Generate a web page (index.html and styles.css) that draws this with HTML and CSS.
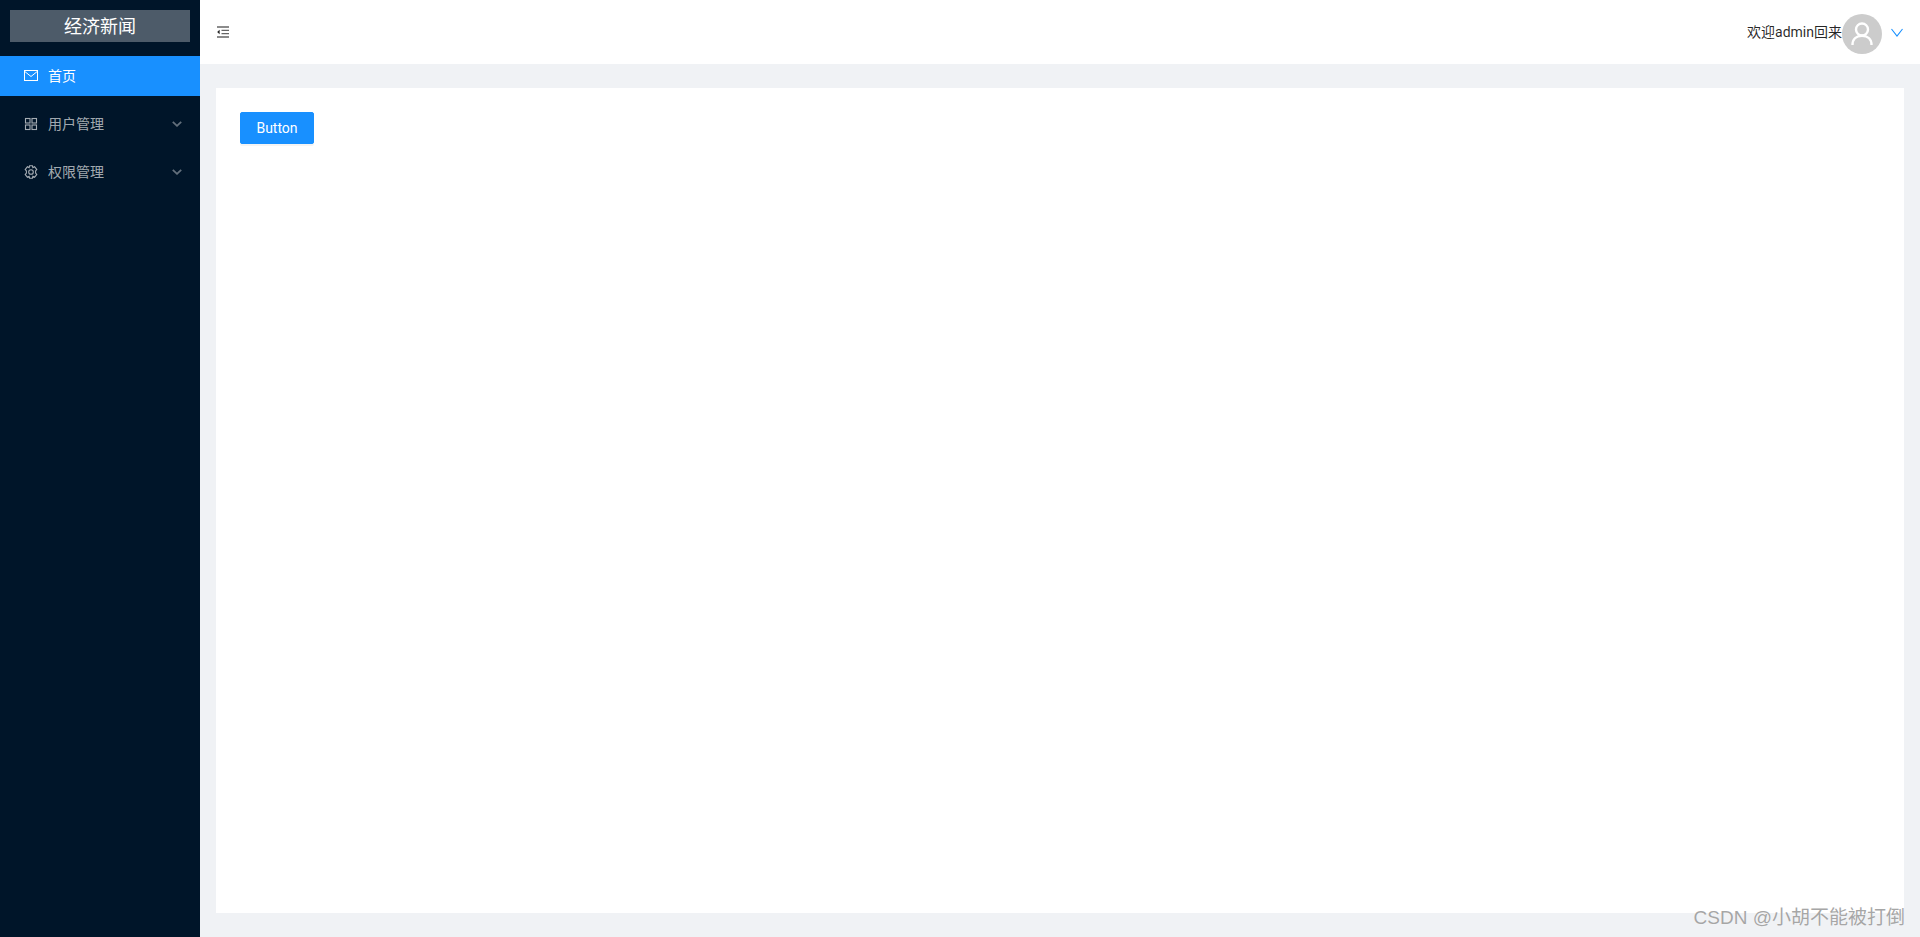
FILE: index.html
```html
<!DOCTYPE html>
<html lang="zh-CN">
<head>
  <meta charset="UTF-8" />
  <title>经济新闻</title>
  <link rel="stylesheet" href="styles.css">
</head>
<body>
  <div class="layout">
    <aside class="sider">
      <div class="logo">经济新闻</div>
      <ul class="menu">
        <li class="menu-item selected">
          <svg class="menu-icon" viewBox="0 0 14 14" fill="none" stroke="currentColor" stroke-width="1">
            <rect x="0.5" y="1.5" width="13" height="10"/>
            <path d="M0.8 2.5 L7 7.5 L13.2 2.5"/>
          </svg>
          <span class="label">首页</span>
        </li>
        <li class="menu-item">
          <svg class="menu-icon" viewBox="0 0 14 14" fill="none" stroke="currentColor" stroke-width="1.1">
            <rect x="1.5" y="1.5" width="4.5" height="4.5"/>
            <rect x="8" y="1.5" width="4.5" height="4.5"/>
            <rect x="1.5" y="8" width="4.5" height="4.5"/>
            <rect x="8" y="8" width="4.5" height="4.5"/>
          </svg>
          <span class="label">用户管理</span>
          <svg class="arrow" viewBox="0 0 10 6" fill="none" stroke="currentColor" stroke-width="1.8">
            <path d="M0.8 0.8 L5 4.8 L9.2 0.8"/>
          </svg>
        </li>
        <li class="menu-item">
          <svg class="menu-icon" viewBox="0 0 14 14" fill="none" stroke="currentColor" stroke-width="1.1">
            <path d="M5.6 0.8 H8.4 L8.9 2.6 L10.6 1.8 L12.8 4.4 L11.6 6 V8 L12.8 9.6 L10.6 12.2 L8.9 11.4 L8.4 13.2 H5.6 L5.1 11.4 L3.4 12.2 L1.2 9.6 L2.4 8 V6 L1.2 4.4 L3.4 1.8 L5.1 2.6 Z"/>
            <circle cx="7" cy="7" r="2.3"/>
          </svg>
          <span class="label">权限管理</span>
          <svg class="arrow" viewBox="0 0 10 6" fill="none" stroke="currentColor" stroke-width="1.8">
            <path d="M0.8 0.8 L5 4.8 L9.2 0.8"/>
          </svg>
        </li>
      </ul>
    </aside>

    <div class="main">
      <header class="header">
        <svg class="fold" viewBox="0 0 12 12" fill="none" stroke="#666" stroke-width="1.3">
          <path d="M0 1 H12 M4.5 4.4 H12 M4.5 7.6 H12 M0 11 H12"/>
          <path d="M2.6 3.8 L0.2 6 L2.6 8.2 Z" fill="#222" stroke="none"/>
        </svg>
        <div class="user">
          <span class="welcome">欢迎admin回来</span>
          <div class="avatar">
            <svg viewBox="0 0 40 40" fill="none" stroke="#fff" stroke-width="2.4">
              <circle cx="20" cy="15.5" r="6"/>
              <path d="M10.5 31 C10.5 25 14.5 21.8 20 21.8 C25.5 21.8 29.5 25 29.5 31"/>
            </svg>
          </div>
          <svg class="down" viewBox="0 0 12 9" fill="none" stroke="#1890ff" stroke-width="1.1">
            <path d="M0.5 1 L6 8 L11.5 1"/>
          </svg>
        </div>
      </header>
      <main class="content">
        <button class="btn">Button</button>
      </main>
    </div>
  </div>
  <div class="watermark">CSDN @小胡不能被打倒</div>
</body>
</html>
```

FILE: styles.css
```css
* {
  box-sizing: border-box;
  margin: 0;
  padding: 0;
}

body {
  font-family: Roboto, "Noto Sans CJK SC", sans-serif;
  font-size: 14px;
  color: rgba(0, 0, 0, 0.85);
  background-color: #f0f2f5;
  height: 937px;
  overflow: hidden;
}

.layout {
  display: flex;
  height: 937px;
}

.sider {
  width: 200px;
  flex-shrink: 0;
  background-color: #001529;
  padding-top: 10px;
}

.logo {
  height: 32px;
  margin: 0 10px 14px;
  background-color: rgba(255, 255, 255, 0.3);
  color: white;
  font-size: 18px;
  line-height: 33px;
  text-align: center;
}

.menu {
  list-style: none;
}

.menu-item {
  display: flex;
  align-items: center;
  height: 40px;
  margin-bottom: 8px;
  padding: 0 16px 0 24px;
  color: rgba(255, 255, 255, 0.65);
}

.menu-item.selected {
  background-color: #1890ff;
  color: white;
}

.label {
  padding-bottom: 2px;
}

.menu-icon {
  width: 14px;
  height: 14px;
  margin-right: 10px;
}

.arrow {
  width: 10px;
  height: 6px;
  margin-left: auto;
  margin-right: 2px;
  opacity: 0.6;
}

.main {
  flex: 1;
  display: flex;
  flex-direction: column;
}

.header {
  display: flex;
  align-items: center;
  justify-content: space-between;
  height: 64px;
  padding: 0 16px;
  background-color: white;
}

.fold {
  width: 12px;
  height: 12px;
  margin-left: 1px;
}

.user {
  display: flex;
  align-items: center;
}

.welcome {
  padding-bottom: 2px;
}

.avatar {
  width: 40px;
  height: 40px;
  margin-top: 4px;
  border-radius: 50%;
  background-color: #ccc;
}

.avatar svg {
  display: block;
  width: 40px;
  height: 40px;
}

.down {
  width: 12px;
  height: 9px;
  margin-left: 9px;
  margin-right: 1px;
}

.content {
  flex: 1;
  margin: 24px 16px;
  padding: 24px;
  background-color: white;
}

.btn {
  display: block;
  width: 74px;
  height: 32px;
  border: 1px solid #1890ff;
  border-radius: 2px;
  background-color: #1890ff;
  color: white;
  font-family: inherit;
  font-size: 14px;
  box-shadow: 0 2px 0 rgba(0, 0, 0, 0.045);
}

.watermark {
  position: absolute;
  right: 15px;
  bottom: 7px;
  font-family: "Liberation Sans", "Noto Sans CJK SC", sans-serif;
  font-size: 19px;
  line-height: 24px;
  color: #a6a6a6;
  text-shadow: 0 0 1px white;
}
```
